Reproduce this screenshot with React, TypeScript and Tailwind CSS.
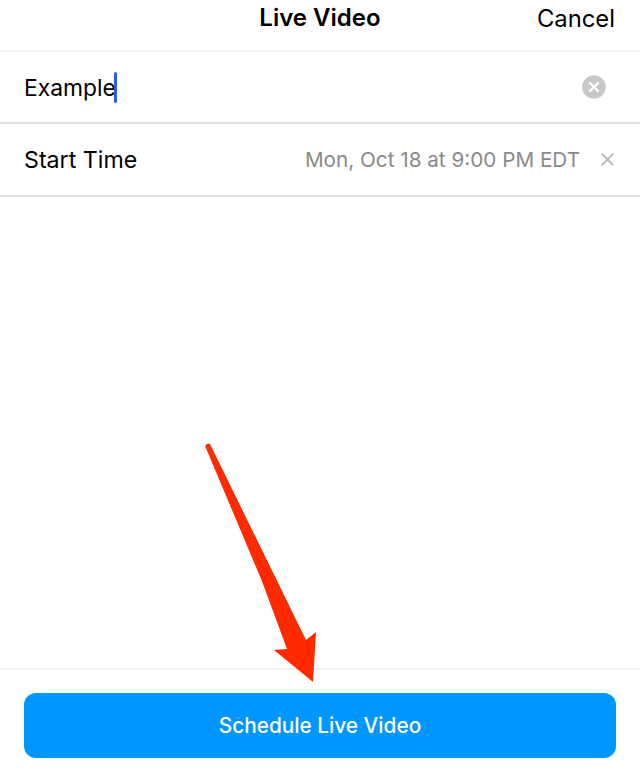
export default function App() {
  return (
    <div className="relative flex h-[769px] w-[640px] flex-col overflow-hidden bg-white font-['Inter',sans-serif] text-black">
      {/* Header */}
      <div className="relative flex h-[52px] shrink-0 items-start justify-center border-b-2 border-[#f0f0f0]">
        <span className="text-[24px] font-semibold leading-[36px]">Live Video</span>
        <span className="absolute right-[25px] top-[4px] text-[23.8px] leading-[30px]">Cancel</span>
      </div>

      {/* Title row */}
      <div className="flex h-[72px] shrink-0 items-center justify-between border-b-2 border-[#e2e2e2] pl-6 pr-[34px]">
        <div className="flex items-center">
          <span className="pt-[2px] text-[22.8px]">Example</span>
          <span className="-ml-[1.5px] h-[31px] w-[3px] rounded-full bg-[#2f5bea]" />
        </div>
        <svg width="24" height="24" viewBox="0 0 24 24">
          <circle cx="12" cy="12" r="11.8" fill="#c8c8c8" />
          <path d="M8 8l8 8M16 8l-8 8" stroke="#fff" strokeWidth="2.4" strokeLinecap="round" />
        </svg>
      </div>

      {/* Start time row */}
      <div className="flex h-[73px] shrink-0 items-center justify-between border-b-2 border-[#e2e2e2] pl-6 pr-[26px]">
        <span className="pt-[2px] text-[23.2px]">Start Time</span>
        <div className="flex items-center gap-[21px]">
          <span className="text-[20.7px] text-[#8a8a8a]">Mon, Oct 18 at 9:00 PM EDT</span>
          <svg width="13" height="13" viewBox="0 0 13 13">
            <path d="M.7.7l11.6 11.6M12.3.7L.7 12.3" stroke="#b8b8b8" strokeWidth="1.9" />
          </svg>
        </div>
      </div>

      <div className="flex-1" />

      {/* Footer */}
      <div className="h-[101px] shrink-0 border-t-2 border-[#f0f0f0] px-6 pt-[22.5px]">
        <button className="flex h-[65.5px] w-full items-center justify-center rounded-xl bg-[#0096ff] text-[20.8px] font-medium text-white">
          Schedule Live Video
        </button>
      </div>

      {/* Annotation arrow */}
      <svg className="absolute left-0 top-0" width="640" height="769" viewBox="0 0 640 769">
        <path
          d="M205.6 447.2a2.7 2.7 0 0 1 4.9-2.2L306 640l10-8-3 50-39-32 13-1-25.5-69z"
          fill="#ff2a00"
        />
      </svg>
    </div>
  )
}
